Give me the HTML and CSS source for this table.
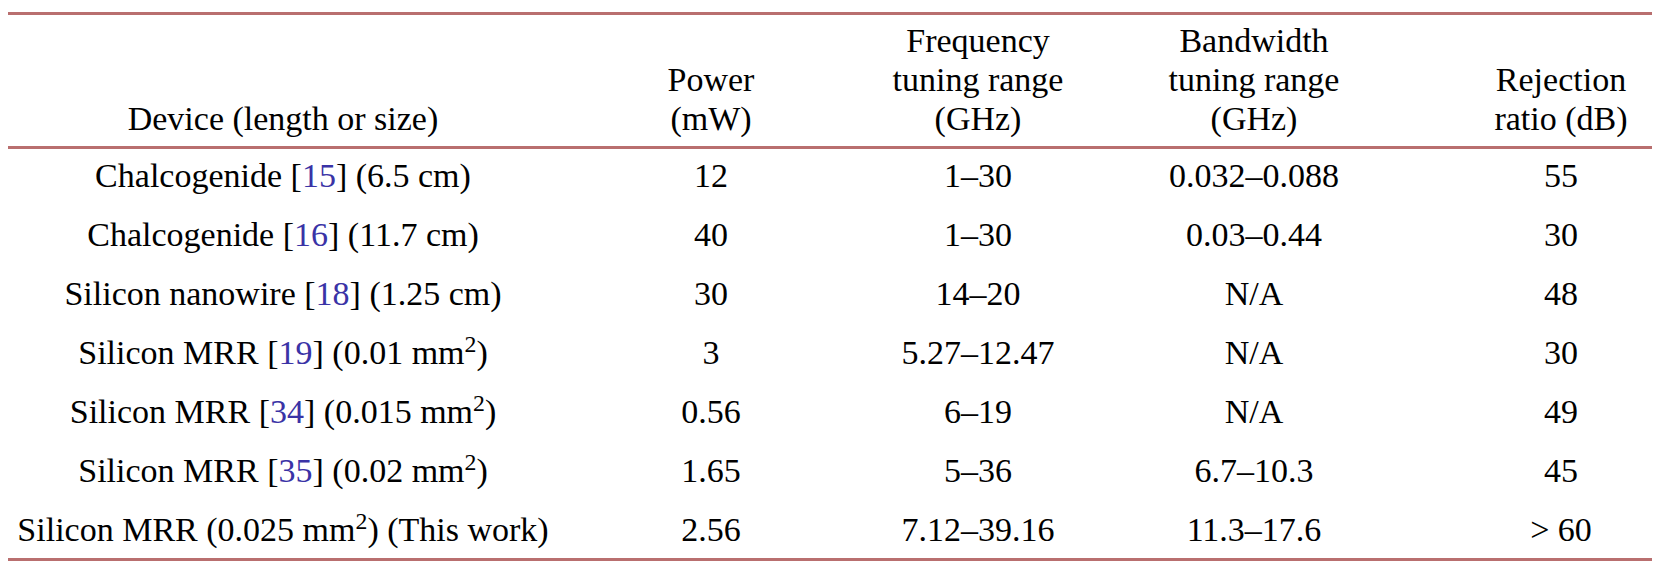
FILE: index.html
```html
<!DOCTYPE html>
<html lang="en">
<head>
<meta charset="utf-8">
<title>Comparison table</title>
<link rel="stylesheet" href="styles.css">
</head>
<body>
<table class="cmp">
  <colgroup>
    <col class="c-dev">
    <col class="c-pow">
    <col class="c-freq">
    <col class="c-bw">
    <col class="c-rej">
  </colgroup>
  <thead>
    <tr>
      <th>Device (length or size)</th>
      <th>Power<br>(mW)</th>
      <th>Frequency<br>tuning range<br>(GHz)</th>
      <th>Bandwidth<br>tuning range<br>(GHz)</th>
      <th class="rej">Rejection<br>ratio (dB)</th>
    </tr>
  </thead>
  <tbody>
    <tr>
      <td>Chalcogenide [<span class="ref">15</span>] (6.5 cm)</td>
      <td>12</td><td>1–30</td><td>0.032–0.088</td><td class="rej">55</td>
    </tr>
    <tr>
      <td>Chalcogenide [<span class="ref">16</span>] (11.7 cm)</td>
      <td>40</td><td>1–30</td><td>0.03–0.44</td><td class="rej">30</td>
    </tr>
    <tr>
      <td>Silicon nanowire [<span class="ref">18</span>] (1.25 cm)</td>
      <td>30</td><td>14–20</td><td>N/A</td><td class="rej">48</td>
    </tr>
    <tr>
      <td>Silicon MRR [<span class="ref">19</span>] (0.01 mm<sup>2</sup>)</td>
      <td>3</td><td>5.27–12.47</td><td>N/A</td><td class="rej">30</td>
    </tr>
    <tr>
      <td>Silicon MRR [<span class="ref">34</span>] (0.015 mm<sup>2</sup>)</td>
      <td>0.56</td><td>6–19</td><td>N/A</td><td class="rej">49</td>
    </tr>
    <tr>
      <td>Silicon MRR [<span class="ref">35</span>] (0.02 mm<sup>2</sup>)</td>
      <td>1.65</td><td>5–36</td><td>6.7–10.3</td><td class="rej">45</td>
    </tr>
    <tr>
      <td>Silicon MRR (0.025 mm<sup>2</sup>) (This work)</td>
      <td>2.56</td><td>7.12–39.16</td><td>11.3–17.6</td><td class="rej">&gt; 60</td>
    </tr>
  </tbody>
</table>
</body>
</html>
```

FILE: styles.css
```css
html, body {
  margin: 0;
  padding: 0;
  background: #ffffff;
}

body {
  padding: 12px 7px 0 8px;
  font-family: "Liberation Serif", "Times New Roman", serif;
  font-size: 34px;
  color: #000000;
}

.cmp {
  width: 1644px;
  border-collapse: collapse;
  table-layout: fixed;
}

.c-dev { width: 550px; }
.c-pow { width: 306px; }
.c-freq { width: 228px; }
.c-bw { width: 324px; }
.c-rej { width: 236px; }

.cmp thead tr {
  border-top: 3px solid #b96f6f;
  border-bottom: 3px solid #b96f6f;
}

.cmp tbody tr:last-child {
  border-bottom: 3px solid #b96f6f;
}

.cmp th {
  font-weight: normal;
  text-align: center;
  vertical-align: bottom;
  line-height: 39px;
  padding: 6px 0 8px 0;
  height: 117px;
}

.cmp td {
  text-align: center;
  vertical-align: middle;
  padding: 7px 0 12px 0;
  line-height: 40px;
  white-space: nowrap;
}

.cmp tbody tr:last-child td {
  padding-bottom: 8px;
}

.cmp .rej {
  padding-left: 54px;
}

.ref {
  color: #3a33a6;
}

sup {
  font-size: 0.7em;
  line-height: 0;
  vertical-align: 0.5em;
}
```
